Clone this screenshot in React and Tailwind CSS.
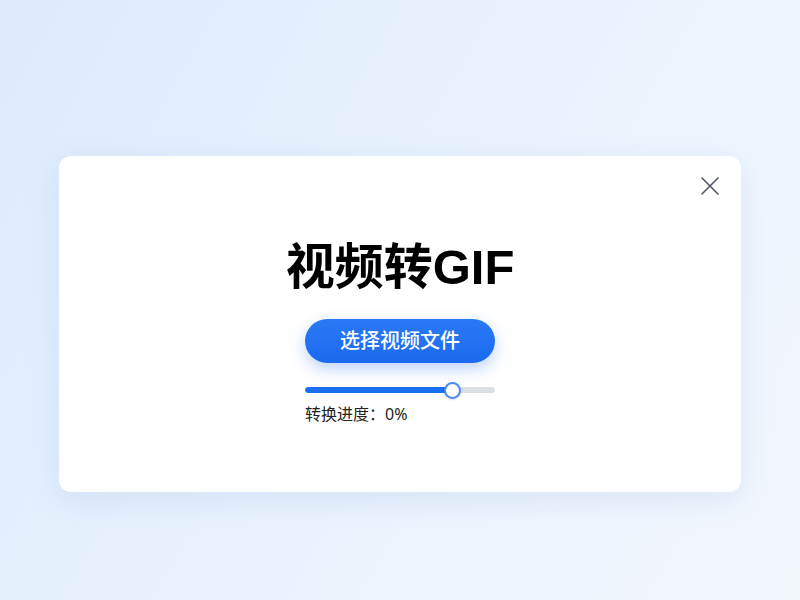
export default function App() {
  return (
    <div
      className="w-[800px] h-[600px] flex justify-center pt-[156px] bg-[linear-gradient(120deg,#dcebfc_0%,#e8f2fd_45%,#f3f7fc_100%)]"
      style={{ fontFamily: '"Noto Sans", "Noto Sans CJK SC", sans-serif' }}
    >
      <div className="relative w-[682px] h-[336px] bg-white rounded-[12px] shadow-[0_8px_30px_rgba(120,160,220,0.18)] flex flex-col items-center pt-[87px]">
        <button className="absolute right-[21px] top-[20px] w-[20px] h-[20px] flex items-center justify-center text-[#4b5563]">
          <svg width="20" height="20" viewBox="0 0 20 20" fill="none" stroke="currentColor" strokeWidth="1.6" strokeLinecap="round">
            <path d="M2 2L18 18M18 2L2 18" />
          </svg>
        </button>
        <h1
          className="text-[49px] leading-none font-bold text-black"
          style={{ fontFamily: '"Liberation Sans", "Noto Sans CJK SC", sans-serif' }}
        >
          视频转GIF
        </h1>
        <button className="mt-[27px] w-[190px] h-[44px] rounded-full bg-[linear-gradient(180deg,#2a7af6,#1b6aef)] text-white text-[20px] leading-none font-medium shadow-[0_6px_16px_rgba(40,110,240,0.3)] flex items-center justify-center">
          选择视频文件
        </button>
        <div className="mt-[19px] w-[190px] h-[16px] relative flex items-center">
          <div className="w-full h-[6px] rounded-full bg-[#dcdfe3] overflow-hidden">
            <div className="h-full bg-[#1a6ef0] rounded-full" style={{ width: '77%' }} />
          </div>
          <div className="absolute left-[139px] top-0 w-[17px] h-[17px] rounded-full bg-white border-2 border-[#4a8cf5] shadow-sm" />
        </div>
        <div className="mt-[4px] w-[190px] text-[16px] leading-[24px] text-[#222]">转换进度：0%</div>
      </div>
    </div>
  );
}
